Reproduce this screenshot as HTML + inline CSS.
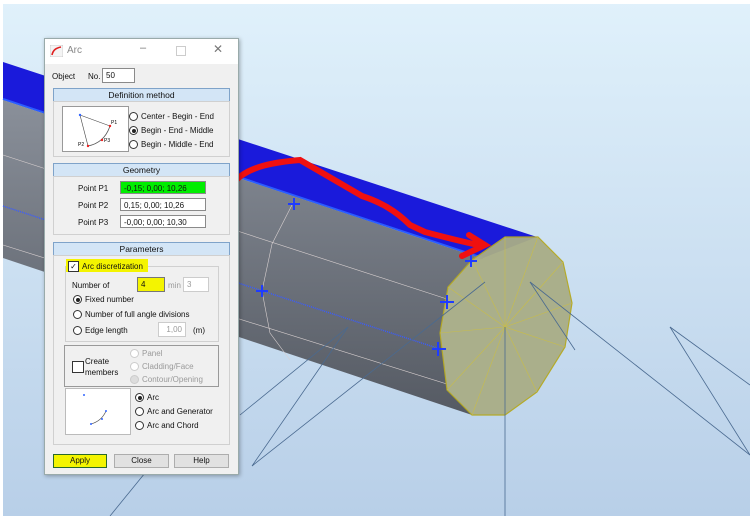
<!DOCTYPE html>
<html><head><meta charset="utf-8"><style>
body{margin:0;width:750px;height:516px;overflow:hidden;position:relative;font-family:"Liberation Sans",sans-serif;font-size:8px;color:#111}
.a{position:absolute}
.hdr{position:absolute;left:53px;width:175px;height:12px;background:#d3e5f6;border:1px solid #7fa3c9;text-align:center;line-height:12px;font-size:8.5px}
.inp{position:absolute;background:#fff;border:1px solid #8a8a8a;height:13px;line-height:13px;padding-left:3px;box-sizing:border-box;font-size:8px}
.rd{position:absolute;width:9px;height:9px;border:1px solid #333;border-radius:50%;background:#fff;box-sizing:border-box}
.rd.on::after{content:"";position:absolute;left:1.5px;top:1.5px;width:4px;height:4px;border-radius:50%;background:#222}
.grp{position:absolute;border:1px solid #d0d0d0}
.btn{position:absolute;top:454px;height:14px;background:#e1e1e1;border:1px solid #adadad;box-sizing:border-box;text-align:center;line-height:12px;font-size:8px}
.dis{color:#9a9a9a}
</style></head><body>
<svg class="a" style="left:0;top:0" width="750" height="516">
<defs><linearGradient id="bg" x1="0" y1="0" x2="0" y2="1"><stop offset="0" stop-color="#e0f1fb"/><stop offset="1" stop-color="#b8cfe8"/></linearGradient>
<linearGradient id="gr" x1="0" y1="0" x2="0" y2="1"><stop offset="0" stop-color="#8a909a"/><stop offset="1" stop-color="#555a63"/></linearGradient></defs>
<rect width="750" height="516" fill="url(#bg)"/>
<rect width="750" height="4" fill="#fff"/>
<rect width="3" height="516" fill="#fff"/>
<polygon points="3,62 537,237 483,258 3,99" fill="#1a1adb"/>
<line x1="3" y1="99" x2="483" y2="258" stroke="#2a5cff" stroke-width="2"/>
<polygon points="3,100 483,259 472,260 448,287 440,333 447,390 472,415 3,258" fill="url(#gr)"/>
<g stroke="#d8d0d0" stroke-width="0.6" fill="none"><line x1="3" y1="155" x2="450" y2="300"/><line x1="3" y1="245" x2="450" y2="385"/><polyline points="294,201 272,244 262,291 270,333 290,360"/></g>
<line x1="3" y1="206" x2="440" y2="349" stroke="#3a5cff" stroke-width="1.5" stroke-dasharray="1,1"/>
<polygon points="505,237 538,237 563,262 572,303 565,347 537,392 505,415 472,415 447,390 440,333 448,287 472,260" fill="#a9ad86" stroke="#b4a820" stroke-width="1.2" opacity="0.95"/>
<g stroke="#c8bd4a" stroke-width="0.6"><line x1="505" y1="327" x2="505" y2="237"/><line x1="505" y1="327" x2="538" y2="237"/><line x1="505" y1="327" x2="563" y2="262"/><line x1="505" y1="327" x2="572" y2="303"/><line x1="505" y1="327" x2="565" y2="347"/><line x1="505" y1="327" x2="537" y2="392"/><line x1="505" y1="327" x2="472" y2="415"/><line x1="505" y1="327" x2="447" y2="390"/><line x1="505" y1="327" x2="440" y2="333"/><line x1="505" y1="327" x2="448" y2="287"/><line x1="505" y1="327" x2="472" y2="260"/></g>
<g stroke="#4a6a90" stroke-width="0.8" fill="none"><line x1="505" y1="327" x2="505" y2="516"/><polyline points="240,415 348,327 252,466 485,282"/><polyline points="530,282 750,455"/><polyline points="530,282 575,350"/><polyline points="670,327 750,385"/><polyline points="670,327 750,455"/><polyline points="110,516 180,430"/></g>
<path d="M220,215 C228,180 240,165 300,160 L362,196 C380,202 395,210 410,225 L425,232 C440,236 455,240 478,245" stroke="#f01010" stroke-width="6" fill="none" stroke-linecap="round"/>
<path d="M469,235 L485,245 L462,256" stroke="#f01010" stroke-width="6" fill="none" stroke-linecap="round"/>
<g stroke="#1f3cff" stroke-width="2"><path d="M288,204h12M294,198v12"/><path d="M256,291h12M262,285v12"/><path d="M440,302h14M447,295v14"/><path d="M432,349h14M438,342v14"/><path d="M465,261h12M471,255v12"/></g>
</svg>
<div class="a" style="left:44px;top:38px;width:195px;height:437px;background:#f0f0f0;border:1px solid #9aa;box-sizing:border-box;box-shadow:1px 1px 4px rgba(0,0,0,.3)"></div>
<div class="a" style="left:45px;top:39px;width:193px;height:25px;background:#fff"></div>
<svg class="a" style="left:50px;top:45px" width="13" height="12"><rect width="13" height="12" fill="#f4f4f4" stroke="#aaa" stroke-width="0.5"/><path d="M2,10 C3,5 6,3 11,2" stroke="#e02020" stroke-width="1.6" fill="none"/></svg>
<div class="a" style="left:67px;top:45px;font-size:10px;color:#888">Arc</div>
<div class="a" style="left:140px;top:42px;font-size:11px;color:#777">–</div>
<div class="a" style="left:176px;top:46px;width:8px;height:8px;border:1px solid #ccc"></div>
<div class="a" style="left:213px;top:42px;font-size:12px;color:#777">✕</div>
<div class="a" style="left:52px;top:72px">Object</div><div class="a" style="left:88px;top:72px">No.</div>
<div class="inp" style="left:102px;top:68px;width:33px;height:15px">50</div>
<div class="hdr" style="top:88px">Definition method</div>
<div class="grp" style="left:53px;top:101px;width:175px;height:54px"></div>
<div class="a" style="left:62px;top:106px;width:65px;height:44px;background:#fff;border:1px solid #999"></div>
<svg class="a" style="left:62px;top:106px" width="65" height="44"><path d="M18,9 L48,20" stroke="#444" stroke-width="0.6"/><path d="M18,9 L26,40" stroke="#444" stroke-width="0.6"/><path d="M26,40 C36,38 44,32 48,20" stroke="#555" stroke-width="0.8" fill="none"/><circle cx="18" cy="9" r="1.2" fill="#36f"/><circle cx="48" cy="20" r="1.2" fill="#e22"/><circle cx="40" cy="34" r="1.2" fill="#e22"/><circle cx="26" cy="40" r="1.2" fill="#e22"/><text x="49" y="18" font-size="5" font-family="Liberation Sans">P1</text><text x="42" y="36" font-size="5" font-family="Liberation Sans">P3</text><text x="16" y="40" font-size="5" font-family="Liberation Sans">P2</text></svg>
<div class="rd" style="left:129px;top:112px"></div><div class="a" style="left:141px;top:112px">Center - Begin - End</div>
<div class="rd on" style="left:129px;top:126px"></div><div class="a" style="left:141px;top:126px">Begin - End - Middle</div>
<div class="rd" style="left:129px;top:140px"></div><div class="a" style="left:141px;top:140px">Begin - Middle - End</div>
<div class="hdr" style="top:163px">Geometry</div>
<div class="grp" style="left:53px;top:176px;width:175px;height:57px"></div>
<div class="a" style="left:78px;top:184px">Point P1</div><div class="inp" style="left:120px;top:181px;width:86px;background:#00ee00">-0,15; 0,00; 10,26</div>
<div class="a" style="left:78px;top:201px">Point P2</div><div class="inp" style="left:120px;top:198px;width:86px">0,15; 0,00; 10,26</div>
<div class="a" style="left:78px;top:218px">Point P3</div><div class="inp" style="left:120px;top:215px;width:86px">-0,00; 0,00; 10,30</div>
<div class="hdr" style="top:242px">Parameters</div>
<div class="grp" style="left:53px;top:255px;width:175px;height:188px"></div>
<div class="grp" style="left:65px;top:266px;width:152px;height:74px"></div>
<div class="a" style="left:66px;top:259px;width:82px;height:13px;background:#f4f400"></div>
<div class="a" style="left:68px;top:261px;width:9px;height:9px;border:1px solid #333;background:#fff;font-size:8px;line-height:9px;text-align:center">✓</div>
<div class="a" style="left:82px;top:262px">Arc discretization</div>
<div class="a" style="left:72px;top:281px">Number of</div>
<div class="inp" style="left:137px;top:277px;width:28px;height:15px;background:#f4f400;border-color:#777">4</div>
<div class="a dis" style="left:168px;top:281px">min</div>
<div class="inp dis" style="left:183px;top:277px;width:26px;height:15px;border-color:#ccc">3</div>
<div class="rd on" style="left:73px;top:295px"></div><div class="a" style="left:85px;top:295px">Fixed number</div>
<div class="rd" style="left:73px;top:310px"></div><div class="a" style="left:85px;top:310px">Number of full angle divisions</div>
<div class="rd" style="left:73px;top:326px"></div><div class="a" style="left:85px;top:326px">Edge length</div>
<div class="inp dis" style="left:158px;top:322px;width:28px;height:15px;border-color:#ccc;text-align:right;padding-right:3px">1,00</div>
<div class="a" style="left:193px;top:326px">(m)</div>
<div class="grp" style="left:64px;top:345px;width:153px;height:40px;border-color:#999"></div>
<div class="a" style="left:72px;top:361px;width:10px;height:10px;border:1px solid #333;background:#fff"></div>
<div class="a" style="left:85px;top:357px">Create</div><div class="a" style="left:85px;top:368px">members</div>
<div class="rd" style="left:130px;top:349px;border-color:#ccc"></div><div class="a dis" style="left:142px;top:349px">Panel</div>
<div class="rd" style="left:130px;top:362px;border-color:#ccc"></div><div class="a dis" style="left:142px;top:362px">Cladding/Face</div>
<div class="rd" style="left:130px;top:375px;border-color:#ccc;background:#ddd"></div><div class="a dis" style="left:142px;top:375px">Contour/Opening</div>
<div class="a" style="left:65px;top:388px;width:64px;height:45px;background:#fff;border:1px solid #bbb"></div>
<svg class="a" style="left:65px;top:388px" width="64" height="45"><path d="M26,36 C33,34 38,30 41,23" stroke="#555" stroke-width="0.7" fill="none"/><circle cx="19" cy="7" r="1" fill="#36f"/><circle cx="41" cy="23" r="1" fill="#36f"/><circle cx="37" cy="31" r="1" fill="#36f"/><circle cx="26" cy="36" r="1" fill="#36f"/></svg>
<div class="rd on" style="left:135px;top:393px"></div><div class="a" style="left:147px;top:393px">Arc</div>
<div class="rd" style="left:135px;top:407px"></div><div class="a" style="left:147px;top:407px">Arc and Generator</div>
<div class="rd" style="left:135px;top:421px"></div><div class="a" style="left:147px;top:421px">Arc and Chord</div>
<div class="btn" style="left:53px;width:54px;background:#f4f400;border-color:#2a6a2a">Apply</div>
<div class="btn" style="left:114px;width:55px">Close</div>
<div class="btn" style="left:174px;width:55px">Help</div>
</body></html>
